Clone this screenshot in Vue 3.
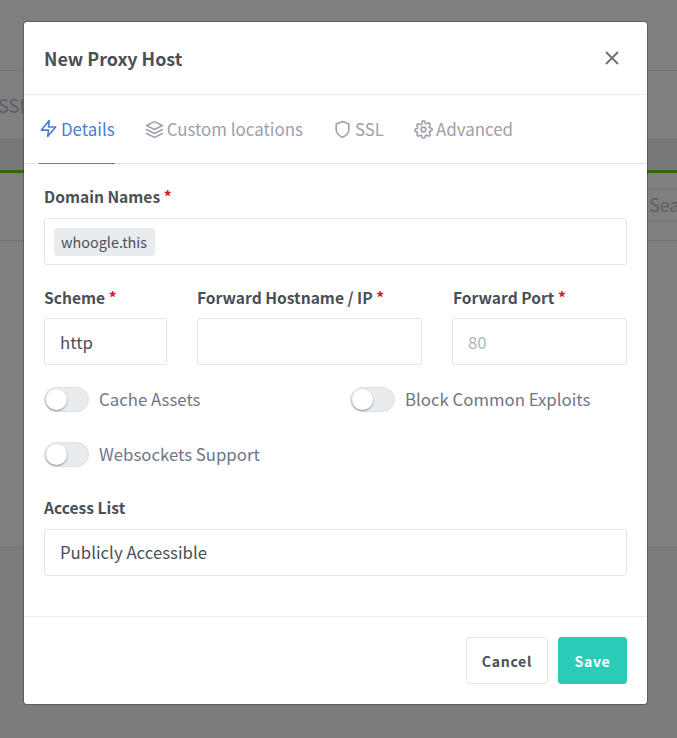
<template>
  <div class="page">
    <div class="backdrop-page">
      <div class="bg-row row-a"></div>
      <div class="bg-row row-b"><span class="bg-ssl">SSL</span></div>
      <div class="bg-row row-c"></div>
      <div class="bg-row row-d"><span class="bg-search">Sea</span></div>
      <div class="bg-row row-e"></div>
    </div>

    <div class="modal">
      <header class="modal-header">
        <h5>New Proxy Host</h5>
        <button class="close" type="button" aria-label="Close">
          <svg width="16" height="16" viewBox="0 0 16 16">
            <path d="M2 2l12 12M14 2L2 14" stroke="currentColor" stroke-width="2" fill="none" />
          </svg>
        </button>
      </header>

      <nav class="tabs">
        <a v-for="tab in tabs" :key="tab.name" class="tab" :class="{ active: tab.active }">
          <svg width="19" height="19" viewBox="0 0 24 24" fill="none" stroke="currentColor" stroke-width="2" stroke-linecap="round" stroke-linejoin="round">
            <path v-for="d in tab.paths" :key="d" :d="d" />
          </svg>
          {{ tab.name }}
        </a>
      </nav>

      <div class="modal-body">
        <div class="field domain">
          <label>Domain Names <em>*</em></label>
          <div class="input tags"><span class="tag">whoogle.this</span></div>
        </div>

        <div class="forward">
          <div class="field scheme">
            <label>Scheme <em>*</em></label>
            <div class="input">http</div>
          </div>
          <div class="field host">
            <label>Forward Hostname / IP <em>*</em></label>
            <div class="input"></div>
          </div>
          <div class="field port">
            <label>Forward Port <em>*</em></label>
            <div class="input placeholder">80</div>
          </div>
        </div>

        <div class="switches">
          <div v-for="s in switches" :key="s" class="switch">
            <span class="toggle"></span>
            <span class="switch-label">{{ s }}</span>
          </div>
        </div>

        <div class="field access">
          <label>Access List</label>
          <div class="input">Publicly Accessible</div>
        </div>
      </div>

      <footer class="modal-footer">
        <button class="btn" type="button">Cancel</button>
        <button class="btn save" type="button">Save</button>
      </footer>
    </div>
  </div>
</template>

<script setup>
const tabs = [
  { name: 'Details', active: true, paths: ['M13 2L3 14h9l-1 8 10-12h-9l1-8z'] },
  { name: 'Custom locations', paths: ['M12 2L2 7l10 5 10-5-10-5z', 'M2 17l10 5 10-5', 'M2 12l10 5 10-5'] },
  { name: 'SSL', paths: ['M12 22s8-4 8-10V5l-8-3-8 3v7c0 6 8 10 8 10z'] },
  {
    name: 'Advanced',
    paths: [
      'M12 15a3 3 0 1 0 0-6 3 3 0 0 0 0 6z',
      'M19.4 15a1.65 1.65 0 0 0 .33 1.82l.06.06a2 2 0 1 1-2.83 2.83l-.06-.06a1.65 1.65 0 0 0-2.82 1.17V21a2 2 0 1 1-4 0v-.09a1.65 1.65 0 0 0-2.82-1.17l-.06.06a2 2 0 1 1-2.83-2.83l.06-.06A1.65 1.65 0 0 0 3.09 15H3a2 2 0 1 1 0-4h.09a1.65 1.65 0 0 0 1.17-2.82l-.06-.06a2 2 0 1 1 2.83-2.83l.06.06A1.65 1.65 0 0 0 10 3.09V3a2 2 0 1 1 4 0v.09a1.65 1.65 0 0 0 2.82 1.17l.06-.06a2 2 0 1 1 2.83 2.83l-.06.06A1.65 1.65 0 0 0 20.91 10H21a2 2 0 1 1 0 4h-.09a1.65 1.65 0 0 0-1.51 1z'
    ]
  }
]

const switches = ['Cache Assets', 'Block Common Exploits', 'Websockets Support']
</script>

<style scoped>
.page {
  position: relative;
  width: 677px;
  height: 738px;
  overflow: hidden;
  background: #7f7f7f;
  font-family: "Noto Sans CJK SC", "Noto Sans", sans-serif;
  font-size: 16.8px;
  color: #495057;
}

/* page behind the overlay */
.backdrop-page {
  position: absolute;
  inset: 0;
  background: #7b7c7e;
}
.bg-row { position: absolute; left: 0; right: 0; }
.row-a { top: 0; height: 70px; background: #7f7f7f; border-bottom: 1px solid #737373; }
.row-b { top: 71px; height: 68px; background: #7f7f7f; border-bottom: 1px solid #737373; color: #5b6066; }
.row-c { top: 140px; height: 30px; background: #777879; border-bottom: 3px solid #2f6b00; }
.row-d { top: 173px; height: 67px; background: #7f7f7f; border-bottom: 1px solid #737373; }
.row-e { top: 241px; height: 306px; background: #7f7f7f; border-bottom: 1px solid #737373; }
.bg-ssl { position: absolute; left: -2px; top: 22px; font-size: 18px; line-height: 24px; }
.bg-search {
  position: absolute;
  left: 647px;
  top: 16px;
  width: 40px;
  height: 31px;
  padding-left: 2px;
  font-size: 18px;
  line-height: 29px;
  border-top: 1px solid #737373;
  border-bottom: 1px solid #737373;
  color: #5b6066;
}

.modal {
  position: absolute;
  left: 24px;
  top: 22px;
  width: 623px;
  height: 682px;
  display: flex;
  flex-direction: column;
  background: #fff;
  border-radius: 3px;
  box-shadow: 0 0 0 1px rgba(0, 0, 0, .25);
}

.modal-header {
  height: 72px;
  padding: 0 20px;
  display: flex;
  align-items: center;
  justify-content: space-between;
  border-bottom: 1px solid #e9ecef;
  flex-shrink: 0;
}
.modal-header h5 {
  margin: 0 0 1px;
  font-size: 17.9px;
  font-weight: 700;
  line-height: 24px;
  color: #495057;
}
.close {
  width: 16px;
  height: 16px;
  padding: 0;
  margin-right: 7px;
  border: 0;
  background: none;
  color: #6c757d;
}
.close svg { display: block; }

.tabs {
  height: 68px;
  padding: 0 15px;
  display: flex;
  gap: 30px;
  border-bottom: 1px solid #e0e5ec;
  flex-shrink: 0;
}
.tab {
  display: flex;
  align-items: center;
  gap: 3px;
  height: 69px;
  margin-bottom: -1px;
  padding-bottom: 1px;
  box-sizing: border-box;
  color: #9aa0ac;
  font-size: 16.9px;
  line-height: 24px;
}
.tab.active {
  color: #467fcf;
  border-bottom: 1px solid #467fcf;
}

.modal-body {
  flex: 1;
  padding: 20px 20px 0;
}
label {
  display: block;
  margin-bottom: 9px;
  font-weight: 600;
  font-size: 15.6px;
  line-height: 24px;
  color: #495057;
}
.domain label { margin-bottom: 10px; }
.port label { padding-left: 1px; }
label em { font-style: normal; color: #cd201f; }

.input {
  box-sizing: border-box;
  height: 47px;
  padding: 0 15px;
  display: flex;
  align-items: center;
  background: #fff;
  border: 1px solid #e0e5ec;
  border-radius: 3px;
  color: #495057;
}
.placeholder { color: #adb5bd; }
.tags { padding: 0 9px; }
.tag {
  height: 28px;
  padding: 0 8px 0 7px;
  display: flex;
  align-items: center;
  background: #e9ecef;
  border-radius: 3px;
  font-size: 14.4px;
}

.forward {
  display: flex;
  gap: 30px;
  margin-top: 20px;
}
.scheme { width: 123px; }
.host { width: 225px; }
.port { width: 175px; }

.switches {
  display: grid;
  grid-template-columns: 306px 1fr;
  row-gap: 30px;
  margin-top: 22px;
}
.switch {
  display: flex;
  align-items: center;
  gap: 10px;
  height: 25px;
  color: #6e7687;
}
.switch-label { margin-bottom: 2px; }
.toggle {
  position: relative;
  box-sizing: border-box;
  width: 45px;
  height: 25px;
  flex-shrink: 0;
  background: #e9ecef;
  border: 1px solid #dce1e7;
  border-radius: 13px;
}
.toggle::before {
  content: "";
  position: absolute;
  left: 1px;
  top: 1px;
  width: 21px;
  height: 21px;
  background: #fff;
  border-radius: 50%;
  box-shadow: 0 1px 2px rgba(0, 0, 0, .4);
}

.access { margin-top: 28px; }
.access label { margin-bottom: 10px; }
.access .input { padding-bottom: 2px; }

.modal-footer {
  height: 88px;
  padding: 20px;
  box-sizing: border-box;
  display: flex;
  justify-content: flex-end;
  gap: 10px;
  border-top: 1px solid #e9ecef;
  flex-shrink: 0;
}
.btn {
  box-sizing: border-box;
  height: 47px;
  padding: 0 15px;
  background: #fff;
  border: 1px solid #e0e5ec;
  border-radius: 3px;
  font: 600 14px "Noto Sans CJK SC", "Noto Sans", sans-serif;
  letter-spacing: .7px;
  color: #495057;
}
.btn.save {
  min-width: 69px;
  background: #2bcbba;
  border-color: #2bcbba;
  color: #fff;
}
</style>
